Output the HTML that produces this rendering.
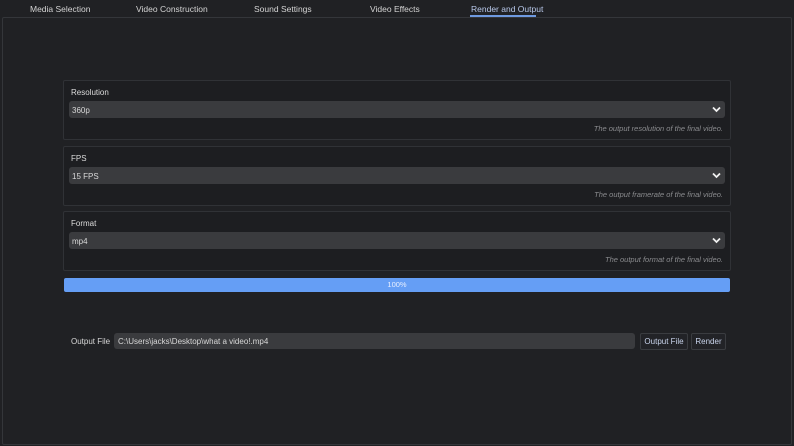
<html><head><style>
body{margin:0;width:794px;height:446px;background:#202124;font-family:"Liberation Sans",sans-serif;font-size:8px;color:#d8d8d8;position:relative;overflow:hidden}
.a{position:absolute}
.tab{position:absolute;top:4px;font-size:8.5px;color:#d4d4d4}
.panel{left:2px;top:17px;width:788px;height:426px;border:1px solid #34363a;border-radius:2px;background:#202124}
.g{left:63px;width:666px;height:58px;border:1px solid #303236;background:#1d1e21;border-radius:2px}
.lbl{left:7px;top:7px;font-size:8px;color:#dcdcdc}
.cb{left:5px;top:20px;width:656px;height:17px;background:#3a3b3e;border-radius:3px}
.cb span{position:absolute;left:3px;top:5px;font-size:8px}
.cb svg{position:absolute;right:4px;top:5px}
.hint{right:7px;top:43px;font-style:italic;font-size:7.5px;color:#8a8b8e}
.btn{top:333px;height:15px;border:1px solid #3a3c40;border-radius:2px;background:#222327;color:#c9d4ec;font-size:8px;text-align:center;line-height:15px}
</style></head><body>
<div class="tab" style="left:30px">Media Selection</div>
<div class="tab" style="left:136px">Video Construction</div>
<div class="tab" style="left:254px">Sound Settings</div>
<div class="tab" style="left:370px">Video Effects</div>
<div class="tab" style="left:471px;color:#b8c8ea">Render and Output</div>
<div class="a" style="left:470px;top:15px;width:66px;height:2px;background:#6f9ae0"></div>
<div class="a panel"></div>
<div class="a g" style="top:80px"><div class="a lbl">Resolution</div><div class="a cb"><span>360p</span><svg width="9" height="7"><path d="M1 1.5L4.5 5L8 1.5" stroke="#f0f0f0" stroke-width="1.8" fill="none"/></svg></div><div class="a hint">The output resolution of the final video.</div></div>
<div class="a g" style="top:146px"><div class="a lbl">FPS</div><div class="a cb"><span>15 FPS</span><svg width="9" height="7"><path d="M1 1.5L4.5 5L8 1.5" stroke="#f0f0f0" stroke-width="1.8" fill="none"/></svg></div><div class="a hint">The output framerate of the final video.</div></div>
<div class="a g" style="top:211px"><div class="a lbl">Format</div><div class="a cb"><span>mp4</span><svg width="9" height="7"><path d="M1 1.5L4.5 5L8 1.5" stroke="#f0f0f0" stroke-width="1.8" fill="none"/></svg></div><div class="a hint">The output format of the final video.</div></div>
<div class="a" style="left:64px;top:278px;width:666px;height:14px;background:#659ef5;border-radius:2px;color:#e8efff;text-align:center;line-height:14px;font-size:7.5px">100%</div>
<div class="a" style="left:71px;top:337px;font-size:8px">Output File</div>
<div class="a" style="left:114px;top:333px;width:521px;height:16px;background:#3a3b3e;border-radius:3px"><span class="a" style="left:4px;top:4px">C:\Users\jacks\Desktop\what a video!.mp4</span></div>
<div class="a btn" style="left:640px;width:46px">Output File</div>
<div class="a btn" style="left:691px;width:33px">Render</div>
</body></html>
